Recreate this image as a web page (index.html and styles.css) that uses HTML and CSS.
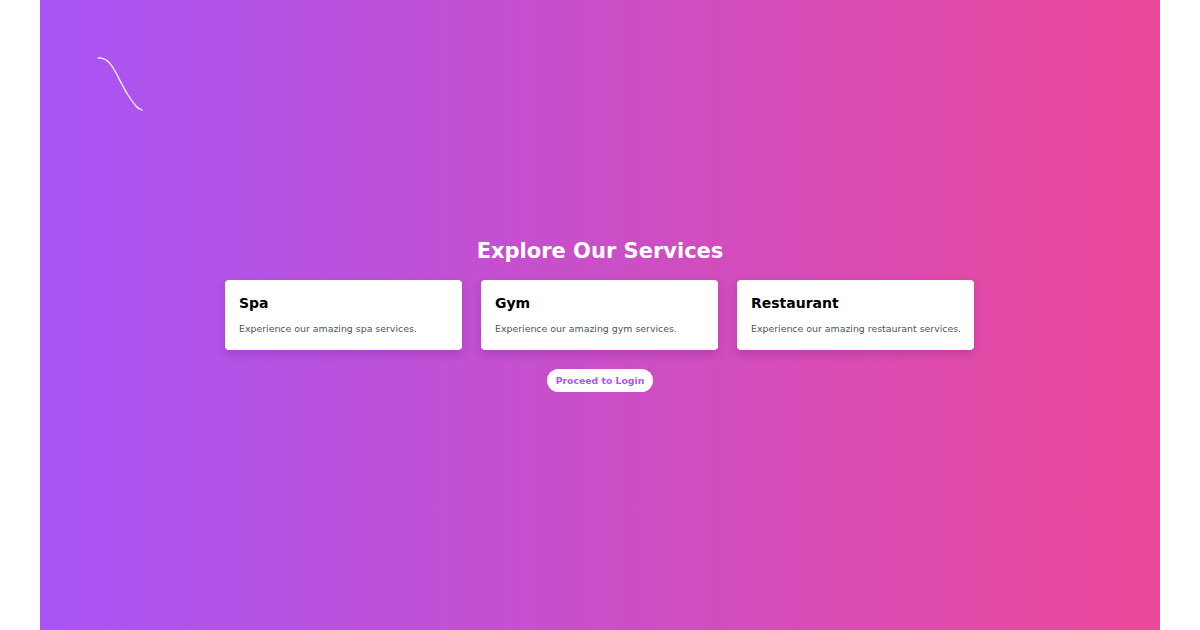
FILE: index.html
```html
<!DOCTYPE html>
<html lang="en">
<head>
<meta charset="utf-8">
<title>Explore Our Services</title>
<link rel="stylesheet" href="styles.css">
</head>
<body>
<div class="page">
  <svg class="swirl" width="60" height="60" viewBox="0 0 60 60" aria-hidden="true">
    <path d="M2 2 C16 0 22 24 32 39 S42 52 46 54" fill="none" stroke="#ffffff" stroke-width="1.2" stroke-linecap="round"/>
  </svg>
  <main class="content">
    <h1 class="title">Explore Our Services</h1>
    <div class="cards">
      <div class="card">
        <h2 class="card-title">Spa</h2>
        <p class="card-text">Experience our amazing spa services.</p>
      </div>
      <div class="card">
        <h2 class="card-title">Gym</h2>
        <p class="card-text">Experience our amazing gym services.</p>
      </div>
      <div class="card">
        <h2 class="card-title">Restaurant</h2>
        <p class="card-text">Experience our amazing restaurant services.</p>
      </div>
    </div>
    <button class="btn">Proceed to Login</button>
  </main>
</div>
</body>
</html>
```
FILE: styles.css
```css
html, body {
  margin: 0;
  padding: 0;
  background: #ffffff;
  font-family: "DejaVu Sans", sans-serif;
}
.page {
  position: relative;
  width: 1120px;
  height: 630px;
  margin: 0 auto;
  background: linear-gradient(to right, #a855f7, #ec4899);
  display: flex;
  align-items: center;
  justify-content: center;
  overflow: hidden;
}
.swirl {
  position: absolute;
  left: 56px;
  top: 56px;
}
.content {
  display: flex;
  flex-direction: column;
  align-items: center;
  margin-bottom: 4px;
}
.title {
  margin: 2px 0 15px;
  color: #ffffff;
  font-size: 21px;
  font-weight: 700;
  line-height: 28px;
}
.cards {
  display: grid;
  grid-template-columns: repeat(3, 237px);
  gap: 19px;
  margin-right: 1px;
}
.card {
  background: #ffffff;
  border-radius: 4px;
  padding: 14px 10px 14px 14px;
  height: 70px;
  box-sizing: border-box;
  box-shadow: 0 4px 10px rgba(60, 0, 80, 0.18);
}
.card-title {
  margin: 0 0 10px;
  font-size: 14px;
  font-weight: 700;
  line-height: 18px;
  color: #000000;
}
.card-text {
  margin: 0;
  font-size: 9.4px;
  line-height: 14px;
  color: #4b5563;
  white-space: nowrap;
}
.btn {
  margin-top: 19px;
  height: 23px;
  padding: 0 9px;
  border: none;
  border-radius: 12px;
  background: #ffffff;
  color: #a855f7;
  font-family: "DejaVu Sans", sans-serif;
  font-size: 9.3px;
  font-weight: 700;
  cursor: pointer;
}
```
